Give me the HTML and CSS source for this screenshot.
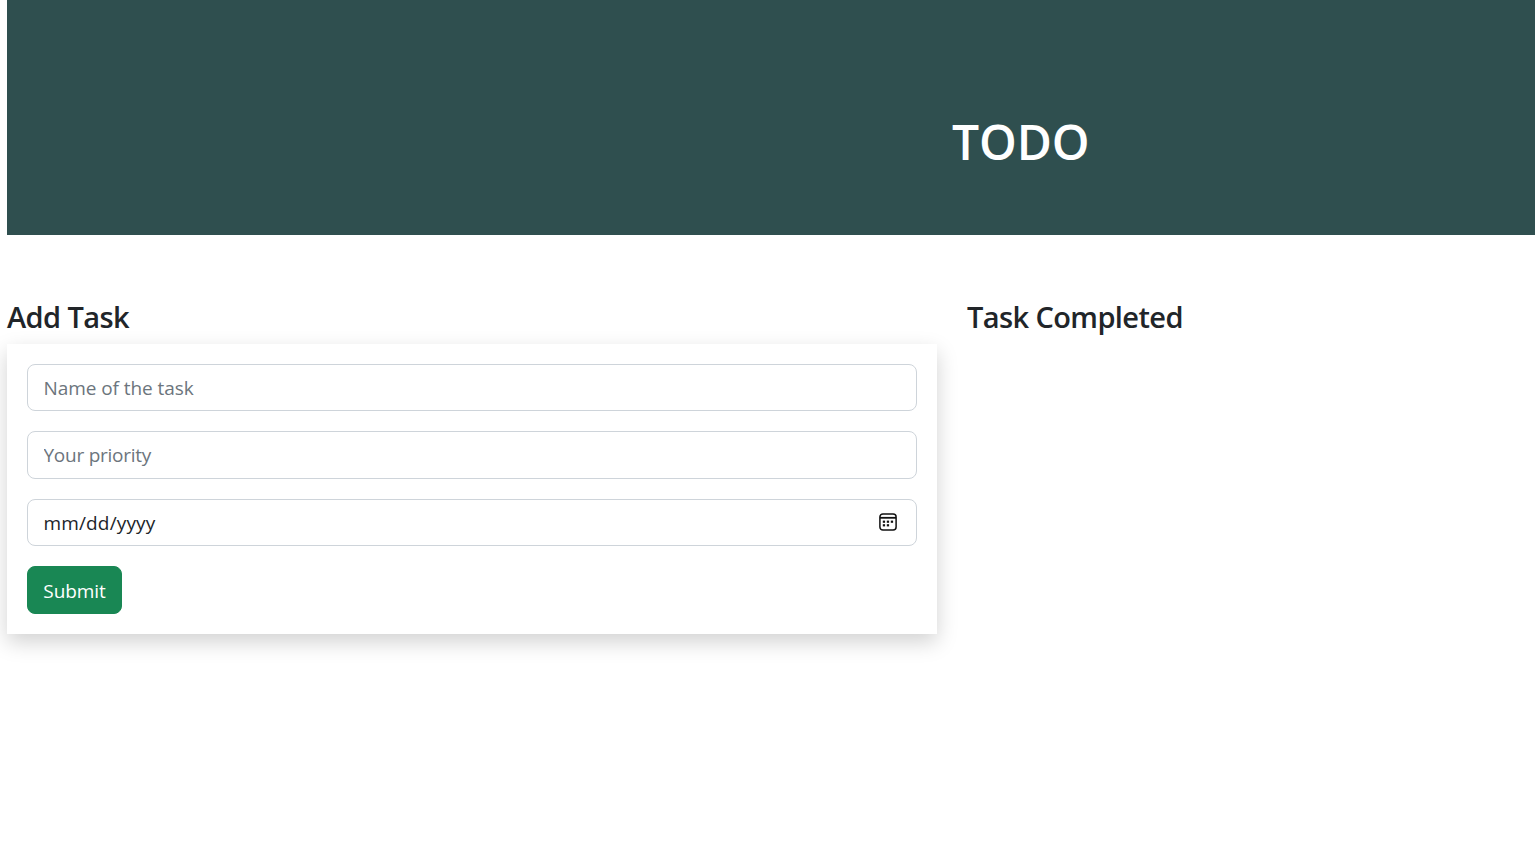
FILE: index.html
```html
<!DOCTYPE html>
<html lang="en">
<head>
<meta charset="utf-8">
<title>TODO</title>
<link rel="stylesheet" href="styles.css">
</head>
<body>
<header class="banner"><h1 class="banner-title">TODO</h1></header>
<main class="columns">
  <section class="add-col">
    <h2 class="col-title">Add Task</h2>
    <form class="card">
      <input class="field field-name" type="text" placeholder="Name of the task">
      <input class="field" type="text" placeholder="Your priority">
      <div class="field date-field">
        <span>mm/dd/yyyy</span>
        <svg class="cal" viewBox="0 0 18 18" width="18" height="18" fill="none" stroke="#111" stroke-width="1.5">
          <rect x="0.9" y="0.9" width="16.2" height="16.2" rx="3"/>
          <path d="M1 4.8h16" stroke-width="1.8"/>
          <g fill="#111" stroke="none">
            <rect x="3.8" y="7.6" width="2.3" height="2.2"/><rect x="7.8" y="7.6" width="2.3" height="2.2"/><rect x="11.8" y="7.6" width="2.3" height="2.2"/>
            <rect x="3.8" y="11.2" width="2.3" height="2.2"/><rect x="7.8" y="11.2" width="2.3" height="2.2"/>
          </g>
        </svg>
      </div>
      <button class="submit" type="button">Submit</button>
    </form>
  </section>
  <section class="done-col">
    <h2 class="col-title">Task Completed</h2>
  </section>
</main>
</body>
</html>
```
FILE: styles.css
```css
* { box-sizing: border-box; }
html, body { margin: 0; background: #fff; }
body {
  min-height: 868px;
  padding-left: 7px;
  font-family: "Open Sans", "Noto Sans", sans-serif;
  color: #212529;
}
.banner {
  height: 235px;
  background: #2f4f4f;
  display: flex;
  padding: 109px 0 0 945px;
}
.banner-title {
  margin: 0;
  font-size: 48px;
  font-weight: 600;
  line-height: 66px;
  letter-spacing: -0.1px;
  color: #fff;
}
.columns {
  display: flex;
  gap: 30px;
  padding-top: 61.75px;
}
.add-col { width: 930px; }
.done-col { flex: 1; }
.col-title {
  margin: 0 0 8px;
  font-size: 29px;
  font-weight: 600;
  line-height: 39px;
  letter-spacing: -0.6px;
  color: #212529;
}
.card {
  background: #fff;
  padding: 20px;
  height: 290px;
  display: flex;
  flex-direction: column;
  gap: 20px;
  align-items: flex-start;
  box-shadow: 0 8px 20px rgba(0, 0, 0, .18);
}
.field {
  width: 100%;
  height: 47.5px;
  flex: none;
  padding: 0 15.5px;
  border: 1px solid #ced4da;
  border-radius: 8px;
  font-family: inherit;
  font-size: 19px;
  letter-spacing: -0.25px;
  color: #212529;
  background: #fff;
}
.field-name { letter-spacing: -0.07px; }
.field::placeholder { color: #6c757d; opacity: 1; }
.date-field {
  display: flex;
  align-items: center;
  justify-content: space-between;
  padding-right: 19px;
  letter-spacing: 0.15px;
}
.cal { display: block; margin-top: -1px; }
.submit {
  height: 48px;
  width: 95px;
  flex: none;
  padding: 1px 0 0;
  border: 1px solid #198754;
  border-radius: 8px;
  background: #198754;
  color: #fff;
  font-family: inherit;
  font-size: 19px;
  letter-spacing: -0.1px;
}
```
